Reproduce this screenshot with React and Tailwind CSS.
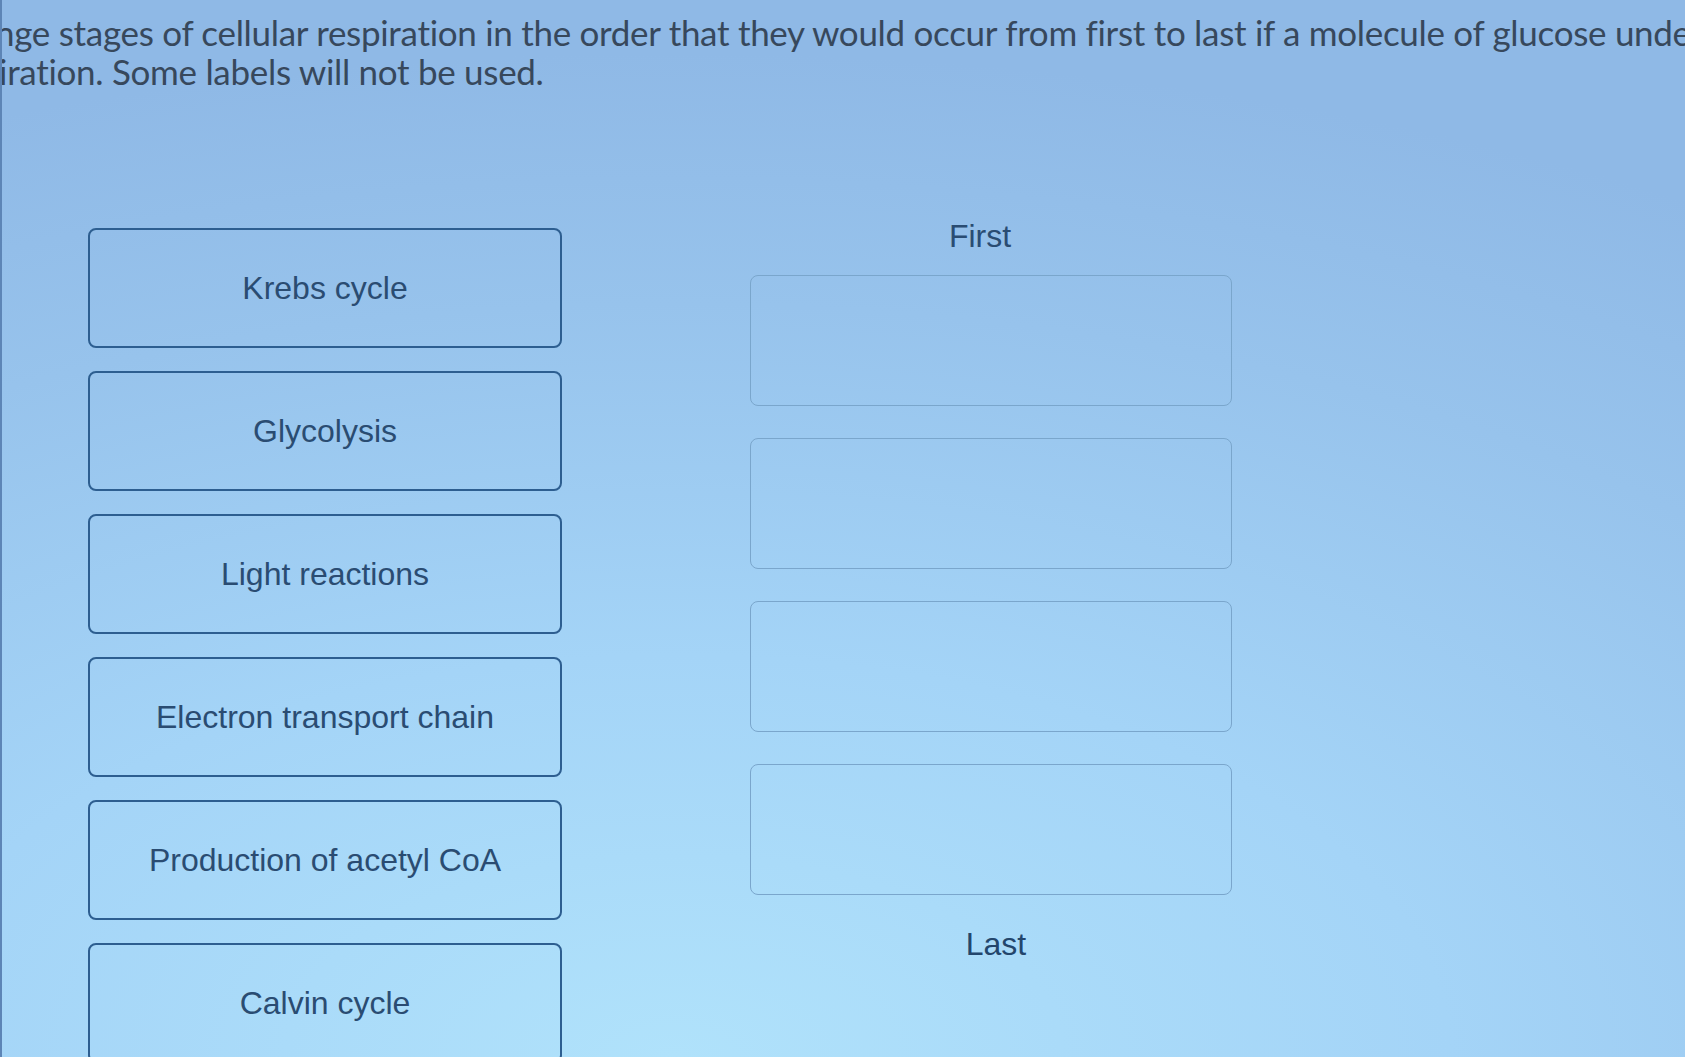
import React from "react";

const labels = [
  "Krebs cycle",
  "Glycolysis",
  "Light reactions",
  "Electron transport chain",
  "Production of acetyl CoA",
  "Calvin cycle",
];

const slots = [1, 2, 3, 4];

const App = () => {
  return (
    <div className="relative w-[1685px] h-[1057px] overflow-hidden bg-[radial-gradient(ellipse_115%_95%_at_40%_100%,#b0e2fb_0%,#a4d4f7_40%,#97c3ec_75%,#8fb9e6_100%)]">
      {/* dark bezel edge on the left */}
      <div className="absolute left-0 top-0 h-full w-[2px] bg-[#5d85b6]" />

      {/* Question text (cut off at the left) */}
      <div className="overflow-hidden pt-[13px]">
        <p className="-ml-[70px] whitespace-nowrap text-[35px] leading-[39px] text-[#37485c] font-['Lato','Open_Sans',sans-serif] tracking-[-0.3px]">
          Arrange stages of cellular respiration in the order that they would occur from first to last if a molecule of glucose underwent aerobic
        </p>
        <p className="-ml-[65px] whitespace-nowrap text-[35px] leading-[39px] text-[#37485c] font-['Lato','Open_Sans',sans-serif] tracking-[-0.3px]">
          respiration. Some labels will not be used.
        </p>
      </div>

      <div className="flex pl-[88px] pt-[137px] font-['Liberation_Sans',Arial,sans-serif] text-[#2a4c72]">
        {/* Labels */}
        <div className="flex flex-col gap-[23px] w-[474px]">
          {labels.map((label) => (
            <div
              key={label}
              className="h-[120px] shrink-0 flex items-center justify-center rounded-[8px] border-2 border-[#2d5e90] text-[32px]"
            >
              {label}
            </div>
          ))}
        </div>

        {/* Drop targets */}
        <div className="ml-[188px] -mt-[12px] w-[482px] flex flex-col items-center">
          <div className="text-[32px] leading-[40px] -ml-[22px]">First</div>
          <div className="mt-[19px] w-full flex flex-col gap-[32px]">
            {slots.map((s) => (
              <div
                key={s}
                className="h-[131px] rounded-[8px] border-[1.5px] border-[#7aa6cc]"
              />
            ))}
          </div>
          <div className="mt-[29px] text-[32px] leading-[40px] ml-[10px] text-[#23466c]">Last</div>
        </div>
      </div>
    </div>
  );
};

export default App;
